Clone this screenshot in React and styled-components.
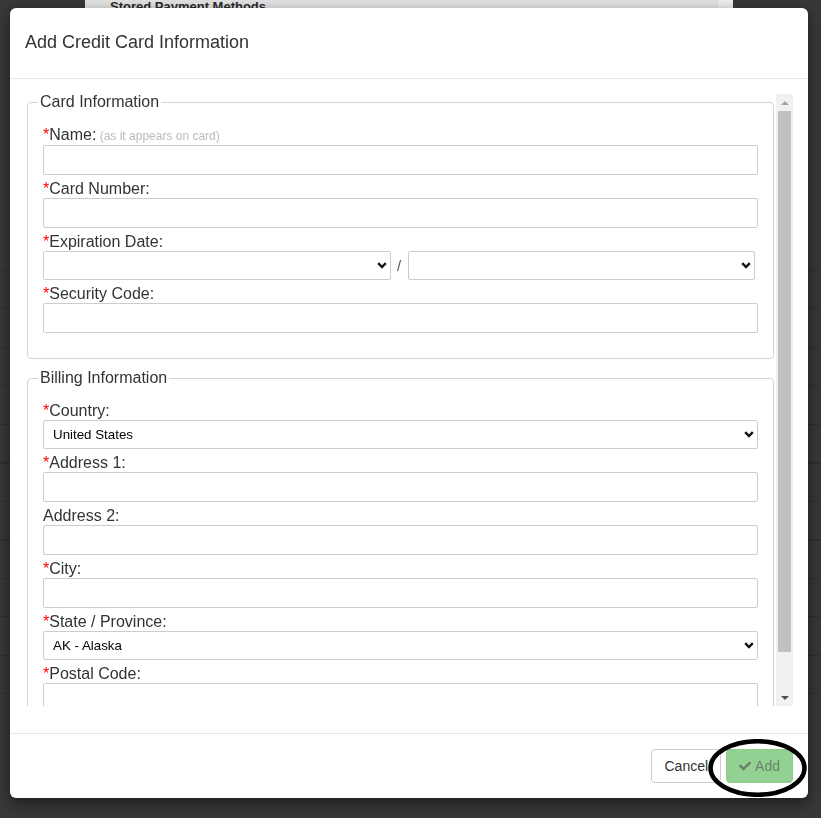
import React from "react";
import styled, { createGlobalStyle } from "styled-components";
import { FaCheck } from "react-icons/fa";

const GlobalStyle = createGlobalStyle`
	html, body {
		margin: 0;
		height: 100%;
	}
	body {
		background: #363636;
		font-family: "Liberation Sans", Arial, sans-serif;
		overflow: hidden;
	}
`;

// the page behind the dimmed backdrop
const Backdrop = styled.div`
	height: 818px;
	background-color: #383838;
	background-image: repeating-linear-gradient(
		to bottom,
		#2f2f2f 0px,
		#2f2f2f 1px,
		transparent 1px,
		transparent 38.5px
	);
	background-position: 0 270px;
	background-repeat: no-repeat;
	background-size: 100% 460px;
`;

const PanelStrip = styled.div`
	margin-left: 85px;
	width: 648px;
	height: 14px;
	background: linear-gradient(to right, #e3e3e3 0, #e3e3e3 633px, #efefef 633px);
	font-size: 13px;
	font-weight: bold;
	color: #2a2a2a;
	padding: 0 25px;
	box-sizing: border-box;
	line-height: 14px;
	white-space: nowrap;
`;

const Overlay = styled.div`
	position: fixed;
	inset: 0;
	padding: 8px 0 0 10px;
`;

const Modal = styled.div`
	width: 798px;
	height: 790px;
	display: flex;
	flex-direction: column;
	background: #fff;
	border-radius: 6px;
	box-shadow: 0 5px 15px rgba(0, 0, 0, 0.5);
	box-sizing: border-box;
`;

const Header = styled.div`
	height: 71px;
	box-sizing: border-box;
	display: flex;
	align-items: center;
	padding: 0 15px 2px;
	border-bottom: 1px solid #e5e5e5;
`;

const Title = styled.h4`
	margin: 0;
	font-size: 18px;
	font-weight: normal;
	color: #333;
	line-height: 26px;
`;

const Body = styled.div`
	flex: 1;
	padding: 15px 15px 27px;
`;

const Scroller = styled.div`
	height: 612px;
	display: flex;
	overflow: hidden;
`;

const ScrollContent = styled.div`
	flex: 1;
	min-width: 0;
	overflow: hidden;
`;

const ScrollInner = styled.div`
	margin-top: -1px;
`;

const ScrollBar = styled.div`
	width: 17px;
	display: flex;
	flex-direction: column;
	background: #f1f1f1;
`;

const ArrowButton = styled.div`
	height: 17px;
	display: flex;
	align-items: center;
	justify-content: center;
`;

const Track = styled.div`
	flex: 1;
	padding: 0 2px;
`;

const Thumb = styled.div`
	height: 541px;
	background: #c1c1c1;
`;

const Fieldset = styled.fieldset`
	margin: 0 2px 10px;
	padding: 15px 15px 20px;
	border: 1px solid #d3d3d3;
	border-radius: 4px;
	min-inline-size: 0;
`;

const Legend = styled.legend`
	margin-left: -5px;
	padding: 0 2px;
	font-size: 16px;
	line-height: 18px;
	color: #333;
`;

const Field = styled.div`
	display: flex;
	flex-direction: column;
	margin-bottom: 5px;
`;

const Label = styled.label`
	display: block;
	font-size: 16px;
	line-height: 18px;
	color: #333;
`;

const Required = styled.span`
	color: #f00;
`;

const Hint = styled.span`
	font-size: 12px;
	color: #bbb;
`;

const Input = styled.input`
	display: block;
	width: 100%;
	height: 30px;
	box-sizing: border-box;
	border: 1px solid #ccc;
	border-radius: 2px;
	padding: 0 8px;
	font-family: inherit;
	font-size: 14px;
	background: #fff;
	outline: none;
`;

const SelectWrap = styled.div`
	position: relative;
	width: ${(p) => p.$width || "100%"};
`;

const Select = styled.select`
	display: block;
	width: 100%;
	height: 29px;
	box-sizing: border-box;
	appearance: none;
	border: 1px solid #ccc;
	border-radius: 2px;
	padding: 0 24px 0 9px;
	font-family: "Liberation Sans", Arial, sans-serif;
	font-size: 13.33px;
	color: #000;
	background: #fff;
	outline: none;
`;

const Chevron = styled.svg`
	position: absolute;
	right: 4px;
	top: 11px;
	width: 10px;
	height: 7px;
	pointer-events: none;
`;

const DateRow = styled.div`
	display: flex;
	align-items: center;
`;

const Slash = styled.span`
	width: 17px;
	text-align: center;
	font-size: 15px;
	color: #555;
`;

const Footer = styled.div`
	position: relative;
	display: flex;
	justify-content: flex-end;
	gap: 5px;
	padding: 15px;
	border-top: 1px solid #e5e5e5;
`;

const Button = styled.button`
	display: inline-flex;
	align-items: center;
	gap: 4px;
	height: 34px;
	padding: 6px 12px;
	box-sizing: border-box;
	font-family: inherit;
	font-size: 14px;
	border-radius: 4px;
	border: 1px solid ${(p) => (p.$success ? "#8dce8d" : "#ccc")};
	background: ${(p) => (p.$success ? "#93d193" : "#fff")};
	color: ${(p) => (p.$success ? "#6a7f6a" : "#333")};
	cursor: ${(p) => (p.disabled ? "not-allowed" : "pointer")};
`;

const Annotation = styled.svg`
	position: absolute;
	right: 1px;
	bottom: 1px;
	width: 99px;
	height: 58px;
	pointer-events: none;
`;

const Req = () => <Required>*</Required>;

const Dropdown = ({ value, width }) => (
	<SelectWrap $width={width}>
		<Select defaultValue={value}>
			<option>{value}</option>
		</Select>
		<Chevron viewBox="0 0 10 7">
			<polyline points="1.2,1.2 5,5 8.8,1.2" fill="none" stroke="#111" strokeWidth="2.4" />
		</Chevron>
	</SelectWrap>
);

const TextField = ({ label, required, hint }) => (
	<Field>
		<Label>
			{required && <Req />}
			{label}
			{hint && <Hint> {hint}</Hint>}
		</Label>
		<Input type="text" />
	</Field>
);

const SelectField = ({ label, value }) => (
	<Field>
		<Label>
			<Req />
			{label}
		</Label>
		<Dropdown value={value} />
	</Field>
);

const Arrow = ({ up }) => (
	<ArrowButton>
		<svg width="8" height="4" viewBox="0 0 8 4">
			<polygon
				points={up ? "0,4 4,0 8,4" : "0,0 8,0 4,4"}
				fill={up ? "#a3a3a3" : "#505050"}
			/>
		</svg>
	</ArrowButton>
);

const App = () => {
	return (
		<>
			<GlobalStyle />
			<Backdrop>
				<PanelStrip>Stored Payment Methods</PanelStrip>
			</Backdrop>
			<Overlay>
				<Modal>
					<Header>
						<Title>Add Credit Card Information</Title>
					</Header>
					<Body>
						<Scroller>
							<ScrollContent>
								<ScrollInner>
									<Fieldset>
										<Legend>Card Information</Legend>
										<TextField label="Name:" required hint="(as it appears on card)" />
										<TextField label="Card Number:" required />
										<Field>
											<Label>
												<Req />
												Expiration Date:
											</Label>
											<DateRow>
												<Dropdown value="" width="calc(50% - 10px)" />
												<Slash>/</Slash>
												<Dropdown value="" width="calc(50% - 10px)" />
											</DateRow>
										</Field>
										<TextField label="Security Code:" required />
									</Fieldset>
									<Fieldset>
										<Legend>Billing Information</Legend>
										<SelectField label="Country:" value="United States" />
										<TextField label="Address 1:" required />
										<TextField label="Address 2:" />
										<TextField label="City:" required />
										<SelectField label="State / Province:" value="AK - Alaska" />
										<TextField label="Postal Code:" required />
									</Fieldset>
								</ScrollInner>
							</ScrollContent>
							<ScrollBar>
								<Arrow up />
								<Track>
									<Thumb />
								</Track>
								<Arrow />
							</ScrollBar>
						</Scroller>
					</Body>
					<Footer>
						<Button type="button">Cancel</Button>
						<Button type="button" $success disabled>
							<FaCheck size={12} />
							Add
						</Button>
						<Annotation viewBox="0 0 99 58">
							<ellipse cx="49.5" cy="29" rx="47" ry="26.8" fill="none" stroke="#000" strokeWidth="4.5" />
						</Annotation>
					</Footer>
				</Modal>
			</Overlay>
		</>
	);
};

export default App;
